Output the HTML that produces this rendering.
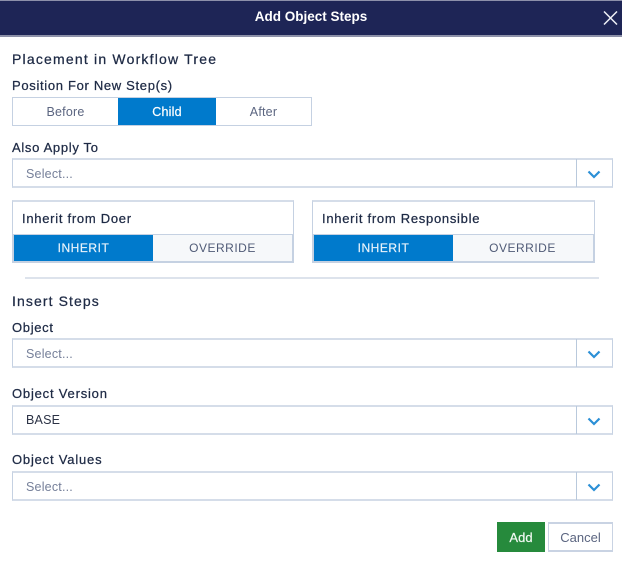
<!DOCTYPE html>
<html><head><meta charset="utf-8"><style>
html,body{margin:0;padding:0;width:622px;height:564px;overflow:hidden;background:#fff;font-family:"Liberation Sans",sans-serif}
div,span{position:absolute;box-sizing:border-box;white-space:nowrap}
.t{line-height:16px;height:16px}
.h{font-size:14px;color:#1e2a45;letter-spacing:1.2px;-webkit-text-stroke:.25px #1e2a45}
.l{font-size:13px;color:#1e2a45;letter-spacing:.68px;-webkit-text-stroke:.25px #1e2a45}
.s{height:30px;left:12px;width:601px;background:#fff;border:1px solid #c5d1e2;border-top:2px solid #d5dde9;border-bottom:2px solid #d5dde9}
.s i{position:absolute;left:563px;top:-1px;bottom:-1px;width:1px;background:#b9c9dc}
.s svg{position:absolute;left:574px;top:10px}
.p{font-size:12.5px;left:13px;top:6px;color:#76809a;letter-spacing:.2px;line-height:16px}
.c{text-align:center;line-height:27px;font-size:12px}
.i{color:#e8f3fb;letter-spacing:.55px;-webkit-text-stroke:.2px #e8f3fb;background:#007acc}
.o{color:#4f5a76;letter-spacing:.5px}
.b{border:1px solid #c5d1e2;border-top:2px solid #d5dde9;height:63px;top:200px;background:#fff}
.r{top:234px;height:29px;background:#f6f8fa;border:2px solid #c5d1e2;border-top-width:1px}
</style></head><body>
<div style="left:0;top:0;width:622px;height:37px;background:#1e2556;border-top:1px solid #8d90aa;border-bottom:2px solid #8c90a8"></div>
<div class="t" style="left:0;width:622px;top:9px;text-align:center;color:#fff;font-weight:bold;font-size:13.5px">Add Object Steps</div>
<svg style="position:absolute;left:603px;top:11px" width="15" height="14" viewBox="0 0 15 14"><path d="M1 .5L14 13.5M14 .5L1 13.5" stroke="#eef0f6" stroke-width="1.5" fill="none"/></svg>

<div class="t h" style="left:12px;top:51px">Placement in Workflow Tree</div>
<div class="t l" style="left:12px;top:78px">Position For New Step(s)</div>
<div style="left:12px;top:97px;width:300px;height:29px;border:1px solid #c5d1e2;background:#fff"></div>
<div class="t" style="left:13px;width:105px;top:104px;text-align:center;font-size:12.5px;color:#5b6580;letter-spacing:.2px">Before</div>
<div style="left:118px;top:98px;width:98px;height:27px;background:#007acc"></div>
<div class="t" style="left:118px;width:98px;top:104px;text-align:center;font-size:12.5px;color:#fff;letter-spacing:.2px;-webkit-text-stroke:.2px #fff">Child</div>
<div class="t" style="left:216px;width:95px;top:104px;text-align:center;font-size:12.5px;color:#5b6580;letter-spacing:.2px">After</div>

<div class="t l" style="left:12px;top:140px">Also Apply To</div>
<div class="s" style="top:158px"><span class="p">Select...</span><i></i><svg width="14" height="9" viewBox="0 0 14 9"><path d="M1.5 1.5L7 7L12.5 1.5" stroke="#2b8fd6" stroke-width="2.2" fill="none"/></svg></div>

<div class="b" style="left:12px;width:282px"></div>
<div class="t l" style="left:22px;top:211px;letter-spacing:.72px">Inherit from Doer</div>
<div class="r" style="left:12px;width:282px"></div>
<div class="c i" style="left:14px;top:235px;width:139px;height:26px">INHERIT</div>
<div class="c o" style="left:153px;top:235px;width:139px;height:26px">OVERRIDE</div>

<div class="b" style="left:312px;width:283px"></div>
<div class="t l" style="left:322px;top:211px;letter-spacing:.72px">Inherit from Responsible</div>
<div class="r" style="left:312px;width:283px"></div>
<div class="c i" style="left:314px;top:235px;width:139px;height:26px">INHERIT</div>
<div class="c o" style="left:453px;top:235px;width:139px;height:26px">OVERRIDE</div>

<div style="left:25px;top:277px;width:574px;height:2px;background:#dde3ec"></div>

<div class="t h" style="left:12px;top:293px;letter-spacing:1.1px">Insert Steps</div>
<div class="t l" style="left:12px;top:320px">Object</div>
<div class="s" style="top:338px"><span class="p">Select...</span><i></i><svg width="14" height="9" viewBox="0 0 14 9"><path d="M1.5 1.5L7 7L12.5 1.5" stroke="#2b8fd6" stroke-width="2.2" fill="none"/></svg></div>
<div class="t l" style="left:12px;top:386px;letter-spacing:.8px">Object Version</div>
<div class="s" style="top:405px"><span class="p" style="color:#2b3245;top:5px">BASE</span><i></i><svg width="14" height="9" viewBox="0 0 14 9"><path d="M1.5 1.5L7 7L12.5 1.5" stroke="#2b8fd6" stroke-width="2.2" fill="none"/></svg></div>
<div class="t l" style="left:12px;top:452px;letter-spacing:.8px">Object Values</div>
<div class="s" style="top:471px"><span class="p">Select...</span><i></i><svg width="14" height="9" viewBox="0 0 14 9"><path d="M1.5 1.5L7 7L12.5 1.5" stroke="#2b8fd6" stroke-width="2.2" fill="none"/></svg></div>

<div style="left:497px;top:522px;width:48px;height:30px;background:#268a3c;color:#f2f8f3;font-size:13px;line-height:32px;text-align:center;-webkit-text-stroke:.2px #f2f8f3">Add</div>
<div style="left:548px;top:522px;width:65px;height:30px;background:#fff;border:1px solid #c9d3e3;border-top-width:2px;border-bottom-width:2px;color:#5b6580;font-size:13px;line-height:28px;text-align:center">Cancel</div>
</body></html>
